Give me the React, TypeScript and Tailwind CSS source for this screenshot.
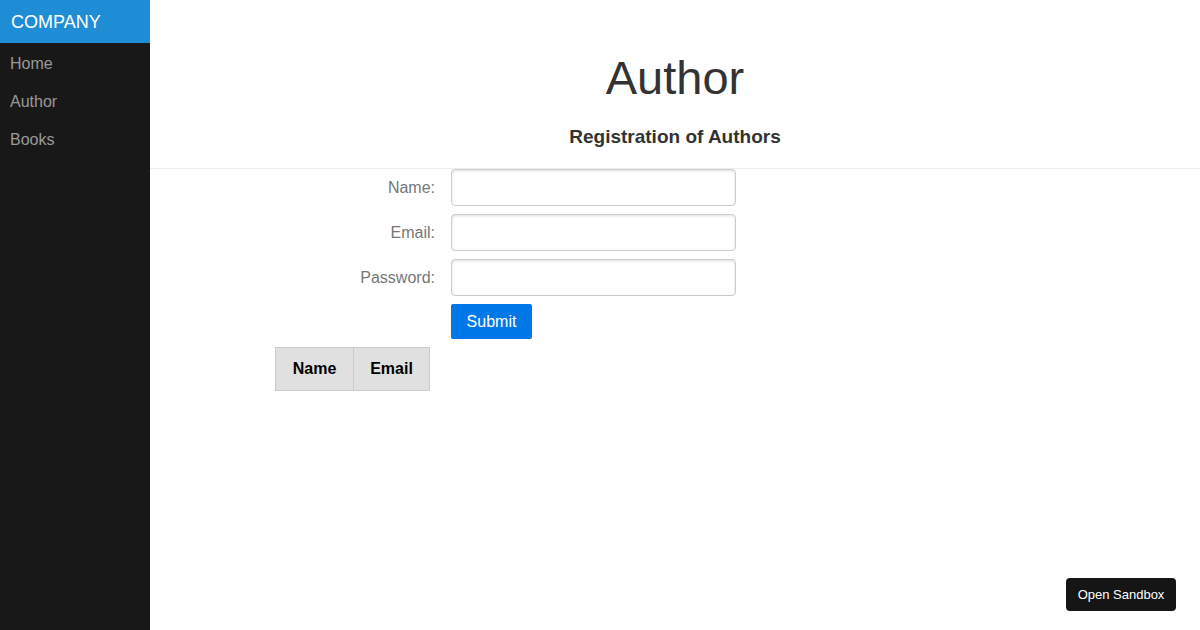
import React from "react";

export default function App() {
  const font = { fontFamily: '"Liberation Sans", Arial, sans-serif' };
  const rows = [
    { label: "Name:", type: "text" },
    { label: "Email:", type: "email" },
    { label: "Password:", type: "password" },
  ];
  return (
    <div className="flex h-screen w-full bg-white" style={font}>
      <aside className="w-[150px] shrink-0 bg-[#191818] flex flex-col">
        <div className="h-[44px] bg-[#1f8dd6] border-b border-[#1a1a1a] flex items-center px-[11px] pt-[1px] text-[18px] text-white uppercase">
          Company
        </div>
        <div className="pt-[1px] flex flex-col">
          {["Home", "Author", "Books"].map((n) => (
            <a key={n} className="h-[38px] flex items-center px-[10px] text-[16px] text-[#999]">
              {n}
            </a>
          ))}
        </div>
      </aside>
      <main className="flex-1 flex flex-col">
        <header className="pt-[40px] border-b border-[#eee] text-center text-[#333]">
          <h1 className="text-[47px] leading-[58px] my-[9px] font-normal">Author</h1>
          <h2 className="text-[19px] leading-[22px] font-bold mt-[19px] mb-[20px]">Registration of Authors</h2>
        </header>
        <div className="w-[800px] mx-auto">
          <form className="flex flex-col gap-[8px]" onSubmit={(e) => e.preventDefault()}>
            {rows.map((r) => (
              <div key={r.label} className="flex items-center">
                <label className="w-[160px] mr-[16px] pt-[1px] text-right text-[16px] text-[#777]">{r.label}</label>
                <input
                  type={r.type}
                  className="w-[285px] h-[37px] border border-[#ccc] rounded-[4px] shadow-[inset_0_1px_3px_#ddd] px-[10px] outline-none"
                />
              </div>
            ))}
            <div className="flex">
              <div className="w-[176px]" />
              <button className="w-[81px] h-[35px] bg-[#0078e7] text-white text-[16px] rounded-[2px]">Submit</button>
            </div>
          </form>
          <table className="mt-[8px] border-collapse border border-[#cbcbcb]">
            <thead>
              <tr className="bg-[#e0e0e0] text-black">
                <th className="w-[78px] h-[43px] px-0 text-[16px] font-bold border border-[#cbcbcb]">Name</th>
                <th className="w-[76px] h-[43px] px-0 text-[16px] font-bold border border-[#cbcbcb]">Email</th>
              </tr>
            </thead>
          </table>
        </div>
      </main>
      <button className="fixed right-[24px] bottom-[19px] w-[110px] h-[33px] bg-[#151515] text-white text-[13px] rounded-[4px]">
        Open Sandbox
      </button>
    </div>
  );
}
